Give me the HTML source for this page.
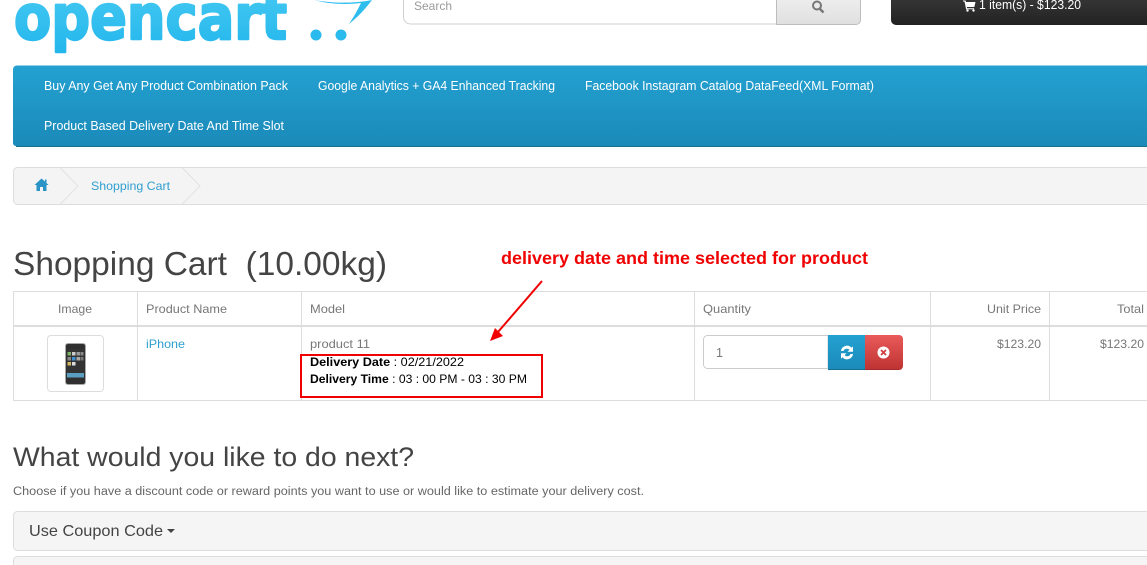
<!DOCTYPE html>
<html><head><meta charset="utf-8"><style>
html,body{margin:0;padding:0;background:#fff;width:1147px;height:565px;overflow:hidden}
svg{display:block}
text{font-family:"Liberation Sans",sans-serif}
</style></head><body>
<svg width="1147" height="565" viewBox="0 0 1147 565" xmlns="http://www.w3.org/2000/svg">
<defs>
<linearGradient id="lg" gradientUnits="userSpaceOnUse" x1="0" y1="0" x2="0" y2="55"><stop offset="0" stop-color="#3fc5f1"/><stop offset="1" stop-color="#22b6ec"/></linearGradient>
<linearGradient id="nav" x1="0" y1="0" x2="0" y2="1"><stop offset="0" stop-color="#23a1d1"/><stop offset="1" stop-color="#1b8ab9"/></linearGradient>
<linearGradient id="sb" x1="0" y1="0" x2="0" y2="1"><stop offset="0" stop-color="#eeeeee"/><stop offset="1" stop-color="#dfdfdf"/></linearGradient>
<linearGradient id="cb" x1="0" y1="0" x2="0" y2="1"><stop offset="0" stop-color="#363636"/><stop offset="1" stop-color="#222222"/></linearGradient>
<linearGradient id="bb" x1="0" y1="0" x2="0" y2="1"><stop offset="0" stop-color="#23a1d1"/><stop offset="1" stop-color="#1b8ab9"/></linearGradient>
<linearGradient id="rb" x1="0" y1="0" x2="0" y2="1"><stop offset="0" stop-color="#ea5a5a"/><stop offset="1" stop-color="#bd3332"/></linearGradient>
</defs>

<!-- logo -->
<text x="14" y="39" font-size="62" font-weight="700" fill="url(#lg)" stroke="url(#lg)" stroke-width="2.400" stroke-linejoin="round" style="font-family:'DejaVu Sans',sans-serif" textLength="273" lengthAdjust="spacingAndGlyphs">opencart</text>
<circle cx="316" cy="35" r="5.500" fill="#2abaed"/><circle cx="341" cy="35" r="5.500" fill="#2abaed"/>
<path d="M314 0C330 3 352 4 372 0C366 8 358 17 349 24C355 15 358 9 361 3C345 5 328 4 314 0Z" fill="#2fbdee"/>

<!-- search -->
<path d="M403.500 -2V17a7 7 0 0 0 7 7H776.500V-2" fill="#fff" stroke="#cfcfcf"/>
<text x="414" y="10" font-size="12" fill="#9a9a9a" textLength="38" lengthAdjust="spacingAndGlyphs">Search</text>
<path d="M776.500 -2V24.500H856a4.500 4.500 0 0 0 4.500-4.500V-2Z" fill="url(#sb)" stroke="#bdbdbd"/>
<circle cx="817" cy="5.500" r="4" fill="none" stroke="#777" stroke-width="2"/><path d="M820 9l3.500 3.500" stroke="#777" stroke-width="2.400"/>

<!-- cart -->
<path d="M891 -2H1147V25H896a5 5 0 0 1-5-5Z" fill="url(#cb)"/>
<path d="M963 0.500h2.500l.6 1.500h9.400l-1.200 5h-7.500l.3 1.300h7v1h-8l-1.600-7.800h-1.500Z" fill="#fff"/><circle cx="967.500" cy="10.500" r="1.200" fill="#fff"/><circle cx="973.500" cy="10.500" r="1.200" fill="#fff"/>
<text x="979" y="9" font-size="12.500" fill="#fff" textLength="102" lengthAdjust="spacingAndGlyphs">1 item(s) - $123.20</text>

<!-- nav -->
<path d="M1147 65.500H17a4 4 0 0 0-4 4V143a3 3 0 0 0 3 3H1147Z" fill="url(#nav)"/>
<rect x="16" y="146" width="1131" height="1" fill="#17708f"/>
<g font-size="13" fill="#fff">
<text x="44" y="90" textLength="244" lengthAdjust="spacingAndGlyphs">Buy Any Get Any Product Combination Pack</text>
<text x="318" y="90" textLength="237" lengthAdjust="spacingAndGlyphs">Google Analytics + GA4 Enhanced Tracking</text>
<text x="585" y="90" textLength="289" lengthAdjust="spacingAndGlyphs">Facebook Instagram Catalog DataFeed(XML Format)</text>
<text x="44" y="130" textLength="240" lengthAdjust="spacingAndGlyphs">Product Based Delivery Date And Time Slot</text>
</g>

<!-- breadcrumb -->
<path d="M1148 167.500H17.500a4 4 0 0 0-4 4V200.500a4 4 0 0 0 4 4H1148Z" fill="#f4f4f4" stroke="#dddddd"/>
<path d="M60 167.500L78 186L60 204.500M182 167.500L200 186L182 204.500" fill="none" stroke="#e2e2e2"/>
<path d="M41.500 178.500L34.500 185h2v6h3.500v-4h3v4H46.500v-6h2L46.500 183v-3.500h-1.500v2Z" fill="#2a94c7"/>
<text x="91" y="190" font-size="12" fill="#2f9fd0" textLength="79" lengthAdjust="spacingAndGlyphs">Shopping Cart</text>

<!-- title -->
<text x="13" y="275" font-size="33" fill="#444444" textLength="374" lengthAdjust="spacingAndGlyphs" xml:space="preserve">Shopping Cart  (10.00kg)</text>
<text x="501" y="264" font-size="17.500" font-weight="700" fill="#f00000" textLength="367" lengthAdjust="spacingAndGlyphs">delivery date and time selected for product</text>

<!-- table -->
<g fill="#dddddd">
<rect x="13" y="291" width="1134" height="1"/>
<rect x="13" y="325" width="1134" height="2"/>
<rect x="13" y="400" width="1134" height="1"/>
<rect x="13" y="291" width="1" height="110"/>
<rect x="137" y="291" width="1" height="110"/>
<rect x="301" y="291" width="1" height="110"/>
<rect x="694" y="291" width="1" height="110"/>
<rect x="930" y="291" width="1" height="110"/>
<rect x="1049" y="291" width="1" height="110"/>
</g>
<g font-size="12" fill="#777777">
<text x="58" y="313" textLength="34" lengthAdjust="spacingAndGlyphs">Image</text>
<text x="146" y="313" textLength="81" lengthAdjust="spacingAndGlyphs">Product Name</text>
<text x="310" y="313" textLength="35" lengthAdjust="spacingAndGlyphs">Model</text>
<text x="703" y="313" textLength="48" lengthAdjust="spacingAndGlyphs">Quantity</text>
<text x="987" y="313" textLength="54" lengthAdjust="spacingAndGlyphs">Unit Price</text>
<text x="1117" y="313" textLength="27" lengthAdjust="spacingAndGlyphs">Total</text>
<text x="310" y="348" textLength="60" lengthAdjust="spacingAndGlyphs">product 11</text>
<text x="997" y="348" textLength="44" lengthAdjust="spacingAndGlyphs">$123.20</text>
<text x="1100" y="348" textLength="44" lengthAdjust="spacingAndGlyphs">$123.20</text>
</g>
<text x="146" y="348" font-size="12" fill="#2f9fd0" textLength="39" lengthAdjust="spacingAndGlyphs">iPhone</text>

<!-- thumbnail -->
<rect x="47.500" y="335.500" width="56" height="56" rx="3.500" fill="#fff" stroke="#dddddd"/>
<rect x="65.500" y="343.500" width="20" height="41" rx="2.500" fill="#303030" stroke="#a8a8a8"/>
<rect x="67" y="349" width="17" height="28" fill="#333"/>
<rect x="67.500" y="352" width="3.500" height="3.500" fill="#7fb069"/><rect x="72" y="352" width="3.500" height="3.500" fill="#ccc"/><rect x="76.500" y="352" width="3.500" height="3.500" fill="#999"/><rect x="80.500" y="352" width="3" height="3.500" fill="#888"/>
<rect x="67.500" y="357" width="3.500" height="3.500" fill="#888"/><rect x="72" y="357" width="3.500" height="3.500" fill="#3d8fd0"/><rect x="76.500" y="357" width="3.500" height="3.500" fill="#aaa"/><rect x="80.500" y="357" width="3" height="3.500" fill="#777"/>
<rect x="67.500" y="362" width="3.500" height="3.500" fill="#d0b860"/><rect x="72" y="362" width="3.500" height="3.500" fill="#ddd"/>
<rect x="67" y="373" width="17" height="4.500" fill="#5a9fc0"/>

<!-- delivery -->
<g font-size="12" fill="#000">
<text x="310" y="366" textLength="154" lengthAdjust="spacingAndGlyphs"><tspan font-weight="700">Delivery Date</tspan> : 02/21/2022</text>
<text x="310" y="383" textLength="217" lengthAdjust="spacingAndGlyphs"><tspan font-weight="700">Delivery Time</tspan> : 03 : 00 PM - 03 : 30 PM</text>
</g>
<rect x="301" y="355" width="241" height="42" fill="none" stroke="#f00000" stroke-width="2"/>
<path d="M542 281L498 332" stroke="#f00000" stroke-width="2" fill="none"/>
<path d="M490 341L495 328L503 336Z" fill="#f00000"/>

<!-- qty -->
<path d="M828 335.500H707.500a4 4 0 0 0-4 4V364.500a4 4 0 0 0 4 4H828Z" fill="#fff" stroke="#cccccc"/>
<text x="716" y="357" font-size="12.500" fill="#777777">1</text>
<rect x="828" y="335" width="37" height="35" fill="url(#bb)"/>
<rect x="828" y="369" width="37" height="1" fill="#17708f"/>
<path d="M865 335H899a4 4 0 0 1 4 4V366a4 4 0 0 1-4 4H865Z" fill="url(#rb)"/>
<path d="M865 369.500H899" stroke="#a32b2b"/>
<path d="M841 351a6 6 0 0 1 10.500-3.200l1.500-1.500v5.500h-5.500l1.900-1.900a3.500 3.500 0 0 0-5.900 1.100ZM853 354a6 6 0 0 1-10.500 3.200l-1.500 1.500v-5.500h5.500l-1.900 1.900a3.500 3.500 0 0 0 5.900-1.100Z" fill="#fff"/>
<circle cx="883.500" cy="352.500" r="6" fill="#fff"/>
<path d="M881 350l5 5M886 350l-5 5" stroke="#d04040" stroke-width="1.800"/>

<!-- next -->
<text x="13" y="466" font-size="27" fill="#444444" textLength="401" lengthAdjust="spacingAndGlyphs">What would you like to do next?</text>
<text x="13" y="495" font-size="11.500" fill="#666666" textLength="631" lengthAdjust="spacingAndGlyphs">Choose if you have a discount code or reward points you want to use or would like to estimate your delivery cost.</text>

<path d="M1148 511.500H17.500a4 4 0 0 0-4 4V546.500a4 4 0 0 0 4 4H1148Z" fill="#f5f5f5" stroke="#dddddd"/>
<text x="29" y="536" font-size="16" fill="#444444" textLength="134" lengthAdjust="spacingAndGlyphs">Use Coupon Code</text>
<path d="M167 529h8l-4 4Z" fill="#444"/>
<path d="M1148 556.500H17.500a4 4 0 0 0-4 4V570H1148Z" fill="#f5f5f5" stroke="#dddddd"/>
</svg>
</body></html>
